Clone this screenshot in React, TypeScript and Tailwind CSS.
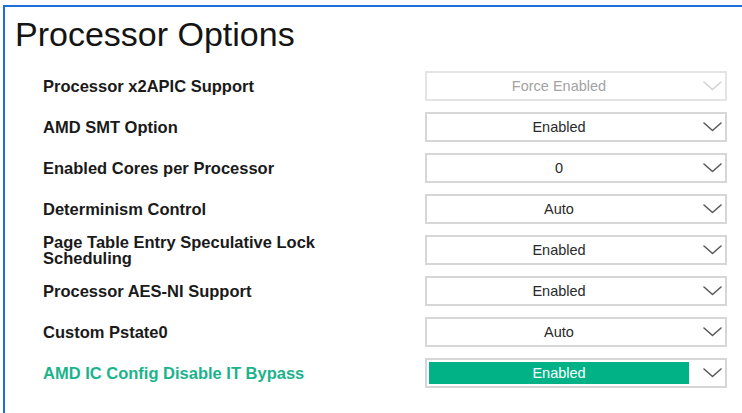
const rows = [
  { label: "Processor x2APIC Support", value: "Force Enabled", disabled: true },
  { label: "AMD SMT Option", value: "Enabled" },
  { label: "Enabled Cores per Processor", value: "0" },
  { label: "Determinism Control", value: "Auto" },
  { label: "Page Table Entry Speculative Lock Scheduling", value: "Enabled" },
  { label: "Processor AES-NI Support", value: "Enabled" },
  { label: "Custom Pstate0", value: "Auto" },
  { label: "AMD IC Config Disable IT Bypass", value: "Enabled", active: true },
];

type Row = { label: string; value: string; disabled?: boolean; active?: boolean };

const Chevron = ({ light }: { light?: boolean }) => (
  <svg width="19" height="10" viewBox="0 0 19 10" fill="none">
    <path
      d="M1 1 L9.5 8.5 L18 1"
      stroke={light ? "#d2d2d2" : "#5a5a5a"}
      strokeWidth="1.6"
      strokeLinecap="round"
      strokeLinejoin="round"
    />
  </svg>
);

const Select = ({ row }: { row: Row }) => (
  <div
    className={`flex h-[30px] w-[302px] shrink-0 p-[2px] border-2 bg-white ${
      row.disabled ? "border-[#e4e4e4]" : "border-[#d6d6d6]"
    }`}
  >
    <div
      className={`flex flex-1 items-center justify-center pt-[1px] text-[14.5px] ${
        row.active
          ? "bg-[#01b287] text-white"
          : row.disabled
            ? "text-[#a3a3a3]"
            : "text-[#2a2a2a]"
      }`}
    >
      {row.value}
    </div>
    <div className="flex w-[34px] items-center justify-end pr-[1px]">
      <Chevron light={row.disabled} />
    </div>
  </div>
);

export default function App() {
  return (
    <div
      className="w-[742px] h-[413px] overflow-hidden bg-white pt-[5px] pl-[3px]"
      style={{ fontFamily: '"Liberation Sans", Arial, sans-serif' }}
    >
      <div className="h-full border-l-2 border-t-2 border-[#1a6fdc]">
        <h1 className="pl-[10px] pt-[7px] text-[34px] leading-[40px] text-[#141414]">
          Processor Options
        </h1>
        <div className="mt-[17px] flex flex-col gap-[11px] pl-[38px]">
          {rows.map((row) => (
            <div key={row.label} className="flex h-[30px] items-center">
              <div
                className={`w-[382px] pr-[40px] text-[16.5px] font-bold leading-[16px] ${
                  row.active ? "text-[#1bb38b]" : "text-[#1a1a1a]"
                }`}
              >
                {row.label}
              </div>
              <Select row={row} />
            </div>
          ))}
        </div>
      </div>
    </div>
  );
}
